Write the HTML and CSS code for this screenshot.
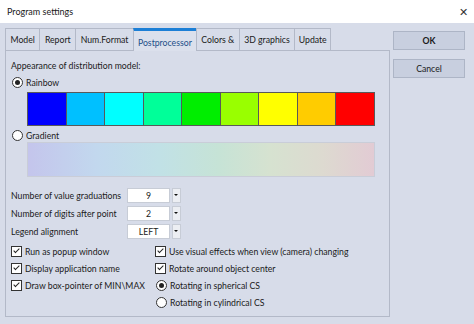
FILE: index.html
```html
<!DOCTYPE html>
<html lang="en">
<head>
<meta charset="UTF-8">
<title>Program settings</title>
<link rel="stylesheet" href="styles.css">
</head>
<body>

<!-- Title -->
<div class="titlebar">
  <span>Program settings</span>
  <span class="x">✕</span>
</div>

<div class="main">
  <div class="tabs-area">
    <div class="tabs">
      <div class="tab">Model</div>
      <div class="tab">Report</div>
      <div class="tab">Num.Format</div>
      <div class="tab active">Postprocessor</div>
      <div class="tab">Colors &amp;</div>
      <div class="tab">3D graphics</div>
      <div class="tab">Update</div>
    </div>

    <div class="panel">
      <div class="caption">Appearance of distribution model:</div>

      <label class="opt"><span class="radio on"></span>Rainbow</label>
      <div class="rainbow">
        <span style="background:#0000ff"></span>
        <span style="background:#00c0ff"></span>
        <span style="background:#00ffff"></span>
        <span style="background:#00ff99"></span>
        <span style="background:#00ee00"></span>
        <span style="background:#99ff00"></span>
        <span style="background:#ffff00"></span>
        <span style="background:#ffcc00"></span>
        <span style="background:#ff0000"></span>
      </div>

      <label class="opt"><span class="radio"></span>Gradient</label>
      <div class="gradient"></div>

      <div class="fields">
        <div class="field">
          <span class="lbl">Number of value graduations</span>
          <div class="spin"><span class="val">9</span><span class="dd"></span></div>
        </div>
        <div class="field">
          <span class="lbl">Number of digits after point</span>
          <div class="spin"><span class="val">2</span><span class="dd"></span></div>
        </div>
        <div class="field">
          <span class="lbl">Legend alignment</span>
          <div class="spin"><span class="val">LEFT</span><span class="dd"></span></div>
        </div>
      </div>

      <div class="checks">
        <div class="col">
          <label class="opt"><span class="check"></span>Run as popup window</label>
          <label class="opt"><span class="check"></span>Display application name</label>
          <label class="opt"><span class="check"></span>Draw box-pointer of MIN\MAX</label>
        </div>
        <div class="col">
          <label class="opt"><span class="check"></span>Use visual effects when view (camera) changing</label>
          <label class="opt"><span class="check"></span>Rotate around object center</label>
          <label class="opt"><span class="radio on"></span>Rotating in spherical CS</label>
          <label class="opt"><span class="radio"></span>Rotating in cylindrical CS</label>
        </div>
      </div>
    </div>
  </div>

  <div class="buttons">
    <div class="btn ok">OK</div>
    <div class="btn">Cancel</div>
  </div>
</div>

</body>
</html>
```

FILE: styles.css
```css
body {
  margin: 0;
  font-family: Lato, "Open Sans", sans-serif;
  font-size: 8.7px;
  color: #1a1a1a;
  background: #d7dce9;
  height: 100vh;
  overflow: hidden;
}

/* Titulo */
.titlebar {
  height: 23px;
  background: #fff;
  display: flex;
  align-items: center;
  justify-content: space-between;
  padding: 0 7px;
  font-size: 9px;
}
.titlebar .x { font-size: 11px; color: #333; margin-right: -1px; }

.main {
  display: flex;
  padding: 5px 0 0 5px;
}

.tabs-area { width: 385px; }

/* Abas */
.tabs {
  display: flex;
  height: 22px;
}
.tab {
  border: 1px solid #b3b9c8;
  border-bottom: none;
  border-right: none;
  padding: 0 4.5px;
  display: flex;
  align-items: center;
  background: #d7dce9;
}
.tab:nth-child(7) { border-right: 1px solid #b3b9c8; padding: 0 3.5px; }
.tab.active {
  border-top: 3px solid #1c7fd6;
  color: #1d4f88;
  padding: 2px 4px 0;
  margin-bottom: -1px;
  background: #dbe0ec;
  position: relative;
}

.panel {
  border: 1px solid #b3b9c8;
  height: 267px;
  padding: 6px 0 0 5px;
  box-sizing: border-box;
}

.caption { height: 17px; line-height: 17px; }

.opt {
  display: flex;
  align-items: center;
  height: 17px;
  gap: 3px;
  white-space: nowrap;
}

.radio {
  width: 9px;
  height: 9px;
  border: 1px solid #333;
  border-radius: 50%;
  background: #fff;
  position: relative;
  margin-left: 1px;
}
.radio.on::after {
  content: "";
  position: absolute;
  left: 2px; top: 2px;
  width: 5px; height: 5px;
  border-radius: 50%;
  background: #222;
}

.check {
  width: 9px;
  height: 9px;
  border: 1px solid #333;
  background: #fff;
  position: relative;
  margin-left: 0;
}
.check::after {
  content: "";
  position: absolute;
  left: 3px; top: 0px;
  width: 2px; height: 5px;
  border: solid #222;
  border-width: 0 1.3px 1.3px 0;
  transform: rotate(45deg);
}

.rainbow {
  display: grid;
  grid-template-columns: repeat(9, 1fr);
  margin: 1px 0 1px 16px;
  width: 348px;
  height: 34px;
  border: 1px solid #595959;
  background: #595959;
  gap: 1px;
  box-sizing: border-box;
}

.gradient {
  margin: -2px 0 0 16px;
  width: 348px;
  height: 35px;
  box-sizing: border-box;
  border: 1px solid #c9cdd8;
  background: linear-gradient(to right, #c4c5ec, #c2d8ee 20%, #c1e1e6 38%, #c6e3d6 55%, #d6e2d0 70%, #dddad0 85%, #e2cbd4);
}

/* Campos */
.fields { margin-top: 9px; }
.field {
  display: flex;
  align-items: center;
  height: 18px;
}
.lbl { width: 116px; }
.spin {
  display: flex;
  height: 15px;
  gap: 2px;
}
.val {
  width: 43px;
  background: #fff;
  border: 1px solid #c7ccd6;
  text-align: center;
  line-height: 13px;
  box-sizing: border-box;
  height: 15px;
}
.dd {
  width: 9px;
  background: #eceef3;
  border: 1px solid #c7ccd6;
  box-sizing: border-box;
  position: relative;
}
.dd::after {
  content: "";
  position: absolute;
  left: 1px; top: 5px;
  border: 2px solid transparent;
  border-top: 2px solid #111;
  border-bottom: none;
}

.checks {
  display: flex;
  margin-top: 3px;
}
.checks .col:first-child { width: 144px; }

/* Botoes */
.buttons {
  display: flex;
  flex-direction: column;
  gap: 9px;
  margin-left: 3px;
  padding-top: 3px;
}
.btn {
  width: 72px;
  height: 19px;
  box-sizing: border-box;
  background: #c8cfdf;
  border: 1px solid #adb5c6;
  display: flex;
  align-items: center;
  justify-content: center;
}
.btn.ok { font-weight: bold; }
```
